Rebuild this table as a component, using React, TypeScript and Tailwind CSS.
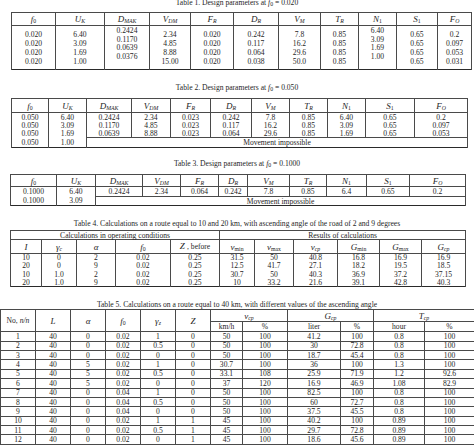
import type { ReactNode } from 'react'

const cell = 'border-x border-[#4a4a4a] p-0 text-center align-middle font-normal'
const topCell = 'border-x border-[#4a4a4a] p-0 text-center align-top font-normal'
const headSym = 'border border-[#4a4a4a] p-0 text-center align-middle font-normal text-[9px] leading-[8px]'
const headText = 'border border-[#4a4a4a] p-0 text-center align-middle font-normal text-[7.6px] leading-[7px]'
const frame = 'table-fixed border-collapse border border-[#2a2a2a]'

function Sym({ base, sub, subPlain = false }: { base: string; sub?: string; subPlain?: boolean }) {
  return (
    <span className="italic">
      {base}
      {sub ? <sub className={subPlain ? 'text-[5.8px] not-italic' : 'text-[5.8px]'}>{sub}</sub> : null}
    </span>
  )
}

function Title({ children, className }: { children: ReactNode; className: string }) {
  return <div className={`h-[9px] text-center text-[7.6px] leading-[9px] ${className}`}>{children}</div>
}

function Cols({ widths }: { widths: number[] }) {
  return (
    <colgroup>
      {widths.map((w, i) => (
        <col key={i} style={{ width: w }} />
      ))}
    </colgroup>
  )
}

// shared headers of tables 1-3
const designHead = [
  <Sym base="f" sub="0" subPlain />,
  <Sym base="U" sub="K" />,
  <Sym base="D" sub="MAK" />,
  <Sym base="V" sub="DM" />,
  <Sym base="F" sub="R" />,
  <Sym base="D" sub="R" />,
  <Sym base="V" sub="M" />,
  <Sym base="T" sub="R" />,
  <Sym base="N" sub="1" subPlain />,
  <Sym base="S" sub="1" subPlain />,
  <Sym base="F" sub="O" />,
]

const t1 = [
  { v: ['0.020', '0.020', '0.020', '0.020'] },
  { v: ['6.40', '3.09', '1.69', '1.00'] },
  { v: ['0.2424', '0.1170', '0.0639', '0.0376'], high: true },
  { v: ['2.34', '4.85', '8.88', '15.00'] },
  { v: ['0.020', '0.020', '0.020', '0.020'] },
  { v: ['0.242', '0.117', '0.064', '0.038'] },
  { v: ['7.8', '16.2', '29.6', '50.0'] },
  { v: ['0.85', '0.85', '0.85', '0.85'] },
  { v: ['6.40', '3.09', '1.69', '1.00'], high: true },
  { v: ['0.65', '0.65', '0.65', '0.65'] },
  { v: ['0.2', '0.097', '0.053', '0.031'] },
]

const t2 = [
  ['0.050', '6.40', '0.2424', '2.34', '0.023', '0.242', '7.8', '0.85', '6.40', '0.65', '0.2'],
  ['0.050', '3.09', '0.1170', '4.85', '0.023', '0.117', '16.2', '0.85', '3.09', '0.65', '0.097'],
  ['0.050', '1.69', '0.0639', '8.88', '0.023', '0.064', '29.6', '0.85', '1.69', '0.65', '0.053'],
]
const t2Rows = ['h-[9px]', 'h-[8px]', 'h-[8px]']

const t3 = ['0.1000', '6.40', '0.2424', '2.34', '0.064', '0.242', '7.8', '0.85', '6.4', '0.65', '0.2']

const t4Head = [
  <Sym base="I" />,
  <Sym base="γ" sub="c" />,
  <Sym base="α" />,
  <Sym base="f" sub="0" subPlain />,
  <span>
    <Sym base="Z" /> <span className="text-[7.6px]">, before</span>
  </span>,
  <Sym base="v" sub="min" subPlain />,
  <Sym base="v" sub="max" subPlain />,
  <Sym base="v" sub="cp" />,
  <Sym base="G" sub="min" subPlain />,
  <Sym base="G" sub="max" subPlain />,
  <Sym base="G" sub="cp" />,
]

const t4 = [
  ['10', '0', '2', '0.02', '0.25', '31.5', '50', '40.8', '16.8', '16.9', '16.9'],
  ['20', '0', '9', '0.02', '0.25', '12.5', '41.7', '27.1', '18.2', '19.5', '18.5'],
  ['10', '1.0', '2', '0.02', '0.25', '30.7', '50', '40.3', '36.9', '37.2', '37.15'],
  ['20', '1.0', '9', '0.02', '0.25', '10', '33.2', '21.6', '39.1', '42.8', '40.3'],
]

const t5Left = [
  <span className="text-[7.6px]">
    No, <span className="italic">n/n</span>
  </span>,
  <Sym base="L" />,
  <Sym base="α" />,
  <Sym base="f" sub="0" subPlain />,
  <Sym base="γ" sub="z" />,
  <Sym base="Z" />,
]

const t5 = [
  ['1', '40', '0', '0.02', '1', '0', '50', '100', '41.2', '100', '0.8', '100'],
  ['2', '40', '0', '0.02', '0.5', '0', '50', '100', '30', '72.8', '0.8', '100'],
  ['3', '40', '0', '0.02', '0', '0', '50', '100', '18.7', '45.4', '0.8', '100'],
  ['4', '40', '5', '0.02', '1', '0', '30.7', '100', '36', '100', '1.3', '100'],
  ['5', '40', '5', '0.02', '0.5', '0', '33.1', '108', '25.9', '71.9', '1.2', '92.6'],
  ['6', '40', '5', '0.02', '0', '0', '37', '120', '16.9', '46.9', '1.08', '82.9'],
  ['7', '40', '0', '0.04', '1', '0', '50', '100', '82.5', '100', '0.8', '100'],
  ['8', '40', '0', '0.04', '0.5', '0', '50', '100', '60', '72.7', '0.8', '100'],
  ['9', '40', '0', '0.04', '0', '0', '50', '100', '37.5', '45.5', '0.8', '100'],
  ['10', '40', '0', '0.02', '1', '1', '45', '100', '40.2', '100', '0.89', '100'],
  ['11', '40', '0', '0.02', '0.5', '1', '45', '100', '29.7', '72.8', '0.89', '100'],
  ['12', '40', '0', '0.02', '0', '1', '45', '100', '18.6', '45.6', '0.89', '100'],
]

export default function App() {
  return (
    <div className="h-[446px] w-[474px] overflow-hidden bg-white font-['Liberation_Serif','Times_New_Roman',serif] text-[7.6px] leading-[7px] text-[#262626]">
      {/* Table 1 */}
      <Title className="-mt-[2.5px]">
        Table 1. Design parameters at <Sym base="f" sub="0" subPlain /> = 0.020
      </Title>
      <table className={`${frame} ml-[11px] mt-[5.5px] w-[460px]`}>
        <Cols widths={[44, 49, 45, 41, 43, 45, 42, 38, 38, 41, 34]} />
        <thead>
          <tr className="h-[13px]">
            {designHead.map((h, i) => (
              <th key={i} className={headSym}>
                {h}
              </th>
            ))}
          </tr>
        </thead>
        <tbody>
          <tr className="h-[44px]">
            {t1.map((col, i) => (
              <td key={i} className={topCell}>
                <div className={col.high ? 'pt-[1px] leading-[8.7px]' : 'pt-[4px] leading-[9px]'}>
                  {col.v.map((v, j) => (
                    <div key={j}>{v}</div>
                  ))}
                </div>
              </td>
            ))}
          </tr>
        </tbody>
      </table>

      {/* Table 2 */}
      <Title className="mt-[13px]">
        Table 2. Design parameters at <Sym base="f" sub="0" subPlain /> = 0.050
      </Title>
      <table className={`${frame} ml-[11px] mt-[6px] w-[456px]`}>
        <Cols widths={[37, 38, 45, 39, 40, 41, 38, 38, 38, 49, 53]} />
        <thead>
          <tr className="h-[14px]">
            {designHead.map((h, i) => (
              <th key={i} className={headSym}>
                {h}
              </th>
            ))}
          </tr>
        </thead>
        <tbody>
          {t2.map((row, r) => (
            <tr key={r} className={t2Rows[r]}>
              {row.map((v, i) => (
                <td key={i} className={cell}>
                  {v}
                </td>
              ))}
            </tr>
          ))}
          <tr className="h-[10px]">
            <td className={cell}>0.050</td>
            <td className={cell}>1.00</td>
            <td colSpan={9} className={`${cell} border-t`}>
              Movement impossible
            </td>
          </tr>
        </tbody>
      </table>

      {/* Table 3 */}
      <Title className="mt-[10.5px]">
        Table 3. Design parameters at <Sym base="f" sub="0" subPlain /> = 0.1000
      </Title>
      <table className={`${frame} ml-[10px] mt-[6.5px] w-[455px]`}>
        <Cols widths={[46, 39, 47, 38, 38, 29, 42, 37, 40, 43, 56]} />
        <thead>
          <tr className="h-[12px]">
            {designHead.map((h, i) => (
              <th key={i} className={headSym}>
                {h}
              </th>
            ))}
          </tr>
        </thead>
        <tbody>
          <tr className="h-[10px]">
            {t3.map((v, i) => (
              <td key={i} className={cell}>
                {v}
              </td>
            ))}
          </tr>
          <tr className="h-[9px]">
            <td className={cell}>0.1000</td>
            <td className={cell}>3.09</td>
            <td colSpan={9} className={`${cell} border-t`}>
              Movement impossible
            </td>
          </tr>
        </tbody>
      </table>

      {/* Table 4 */}
      <Title className="mt-[12.5px]">
        Table 4. Calculations on a route equal to 10 and 20 km, with ascending angle of the road of 2 and 9 degrees
      </Title>
      <table className={`${frame} ml-[10px] mt-[2.5px] w-[455px]`}>
        <Cols widths={[31, 35, 39, 55, 49, 35, 39, 44, 42, 42, 44]} />
        <thead>
          <tr className="h-[9px]">
            <th colSpan={5} className={headText}>
              Calculations in operating conditions
            </th>
            <th colSpan={6} className={headText}>
              Results of calculations
            </th>
          </tr>
          <tr className="h-[14px]">
            {t4Head.map((h, i) => (
              <th key={i} className={headSym}>
                {h}
              </th>
            ))}
          </tr>
        </thead>
        <tbody>
          {t4.map((row, r) => (
            <tr key={r} className="h-[8.3px]">
              {row.map((v, i) => (
                <td key={i} className={cell}>
                  {v}
                </td>
              ))}
            </tr>
          ))}
        </tbody>
      </table>

      {/* Table 5 */}
      <Title className="mt-[12.5px]">
        Table 5. Calculations on a route equal to 40 km, with different values of the ascending angle
      </Title>
      <table className={`${frame} mt-[0.5px] w-[474px]`}>
        <Cols widths={[35, 35, 35, 35, 35, 35, 32, 45, 53, 33, 51, 50]} />
        <thead>
          <tr className="h-[12px]">
            {t5Left.map((h, i) => (
              <th key={i} rowSpan={2} className={headSym}>
                {h}
              </th>
            ))}
            <th colSpan={2} className={headSym}>
              <Sym base="v" sub="cp" />
            </th>
            <th colSpan={2} className={headSym}>
              <Sym base="G" sub="cp" />
            </th>
            <th colSpan={2} className={headSym}>
              <Sym base="T" sub="cp" />
            </th>
          </tr>
          <tr className="h-[10px]">
            {['km/h', '%', 'liter', '%', 'hour', '%'].map((u, i) => (
              <th key={i} className={headText}>
                {u}
              </th>
            ))}
          </tr>
        </thead>
        <tbody>
          {t5.map((row, r) => (
            <tr key={r} className="h-[9.4px]">
              {row.map((v, i) => (
                <td key={i} className={`${cell} border-y`}>
                  {v}
                </td>
              ))}
            </tr>
          ))}
        </tbody>
      </table>
    </div>
  )
}
